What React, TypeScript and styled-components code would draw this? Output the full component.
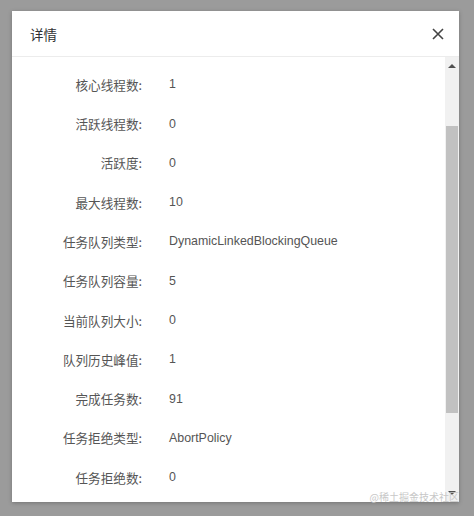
import React from "react";
import styled, { createGlobalStyle } from "styled-components";

const Global = createGlobalStyle`
  html, body { margin: 0; padding: 0; background: #9b9b9b; }
  body { font-family: Arial, "Liberation Sans", "Noto Sans CJK SC", sans-serif; }
`;

const Page = styled.div`
  width: 474px;
  height: 516px;
  box-sizing: border-box;
  padding: 11px 15px 14px 12px;
  background: #9b9b9b;
`;

const Dialog = styled.div`
  position: relative;
  width: 447px;
  height: 491px;
  background: #fff;
  display: flex;
  flex-direction: column;
  box-shadow: 0 1px 4px rgba(0, 0, 0, 0.25);
`;

const Header = styled.div`
  height: 45px;
  flex: none;
  display: flex;
  align-items: center;
  justify-content: space-between;
  padding: 0 14px 0 18px;
  border-bottom: 1px solid #ececec;
`;

const Title = styled.span`
  font-size: 13.5px;
  color: #303133;
  font-family: "Noto Sans CJK SC", sans-serif;
`;

const Close = styled.button`
  border: 0;
  background: none;
  padding: 0;
  width: 14px;
  height: 14px;
  display: flex;
  color: #555;
`;

const Body = styled.div`
  flex: 1;
  display: flex;
  min-height: 0;
`;

const Content = styled.div`
  flex: 1;
  padding-top: 7.6px;
  display: grid;
  grid-auto-rows: 39.3px;
  align-content: start;
`;

const Row = styled.div`
  display: grid;
  grid-template-columns: 130px 1fr;
  column-gap: 27px;
  align-items: center;
  color: #555;
`;

const Label = styled.span`
  text-align: right;
  font-family: "Noto Sans CJK SC", sans-serif;
  font-size: 12.6px;
`;

const Value = styled.span`
  font-family: Arial, "Liberation Sans", sans-serif;
  font-size: 12.4px;
`;

const Scrollbar = styled.div`
  width: 14px;
  flex: none;
  background: #f1f1f1;
  display: flex;
  flex-direction: column;
`;

const Arrow = styled.div`
  height: 17px;
  display: flex;
  align-items: center;
  justify-content: center;
`;

const Track = styled.div`
  flex: 1;
  display: flex;
  flex-direction: column;
  padding: 52px 1px 72px;
`;

const Thumb = styled.div`
  flex: 1;
  background: #c1c1c1;
`;

const Watermark = styled.span`
  position: absolute;
  right: 0;
  bottom: -2px;
  font-size: 10px;
  color: #c8c8c8;
  font-family: "Noto Sans CJK SC", sans-serif;
`;

const rows: [string, string][] = [
  ["核心线程数:", "1"],
  ["活跃线程数:", "0"],
  ["活跃度:", "0"],
  ["最大线程数:", "10"],
  ["任务队列类型:", "DynamicLinkedBlockingQueue"],
  ["任务队列容量:", "5"],
  ["当前队列大小:", "0"],
  ["队列历史峰值:", "1"],
  ["完成任务数:", "91"],
  ["任务拒绝类型:", "AbortPolicy"],
  ["任务拒绝数:", "0"],
];

export default function App() {
  return (
    <Page>
      <Global />
      <Dialog>
        <Header>
          <Title>详情</Title>
          <Close aria-label="close">
            <svg width="14" height="14" viewBox="0 0 14 14">
              <path d="M2 2 L12 12 M12 2 L2 12" stroke="#444" strokeWidth="1.6" fill="none" />
            </svg>
          </Close>
        </Header>
        <Body>
          <Content>
            {rows.map(([l, v]) => (
              <Row key={l}>
                <Label>{l}</Label>
                <Value>{v}</Value>
              </Row>
            ))}
          </Content>
          <Scrollbar>
            <Arrow>
              <svg width="8" height="5" viewBox="0 0 8 5"><path d="M0 5 L4 1 L8 5 Z" fill="#505050" /></svg>
            </Arrow>
            <Track>
              <Thumb />
            </Track>
            <Arrow>
              <svg width="8" height="5" viewBox="0 0 8 5"><path d="M0 0 L4 4 L8 0 Z" fill="#505050" /></svg>
            </Arrow>
          </Scrollbar>
        </Body>
        <Watermark>@稀土掘金技术社区</Watermark>
      </Dialog>
    </Page>
  );
}
